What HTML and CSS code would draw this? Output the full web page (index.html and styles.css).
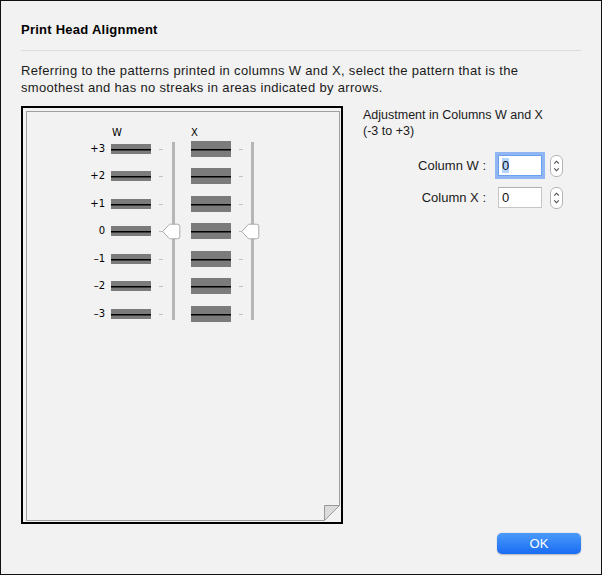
FILE: index.html
```html
<!DOCTYPE html>
<html>
<head>
<meta charset="utf-8">
<link rel="stylesheet" href="styles.css">
</head>
<body>
<div class="window">
  <h1 class="title">Print Head Alignment</h1>
  <hr class="sep">
  <p class="desc">Referring to the patterns printed in columns W and X, select the pattern that is the<br>smoothest and has no streaks in areas indicated by arrows.</p>
  <div class="main">
    <div class="paper">
      <div class="sheet">
        <div class="chart">
          <span class="hdr hdr-w">W</span>
          <span class="hdr hdr-x">X</span>

          <span class="num">+3</span><span class="wbar"></span><span class="dash wdash"></span><span class="xbar"></span><span class="dash xdash"></span>
          <span class="num">+2</span><span class="wbar"></span><span class="dash wdash"></span><span class="xbar"></span><span class="dash xdash"></span>
          <span class="num">+1</span><span class="wbar"></span><span class="dash wdash"></span><span class="xbar"></span><span class="dash xdash"></span>
          <span class="num">0</span><span class="wbar"></span><span class="dash wdash"></span><span class="xbar"></span><span class="dash xdash"></span>
          <span class="num">–1</span><span class="wbar"></span><span class="dash wdash"></span><span class="xbar"></span><span class="dash xdash"></span>
          <span class="num">–2</span><span class="wbar"></span><span class="dash wdash"></span><span class="xbar"></span><span class="dash xdash"></span>
          <span class="num">–3</span><span class="wbar"></span><span class="dash wdash"></span><span class="xbar"></span><span class="dash xdash"></span>

          <span class="track track-w"></span>
          <span class="track track-x"></span>
          <svg class="knob knob-w" viewBox="0 0 19 17" width="19" height="17"><path d="M0.8 8.5 L6.6 2.2 Q7.4 1.2 8.6 1.2 H15.5 Q17.8 1.2 17.8 3.5 V13.5 Q17.8 15.8 15.5 15.8 H8.6 Q7.4 15.8 6.6 14.8 Z" fill="#fff" stroke="#a9a9a9" stroke-width="1"/></svg>
          <svg class="knob knob-x" viewBox="0 0 19 17" width="19" height="17"><path d="M0.8 8.5 L6.6 2.2 Q7.4 1.2 8.6 1.2 H15.5 Q17.8 1.2 17.8 3.5 V13.5 Q17.8 15.8 15.5 15.8 H8.6 Q7.4 15.8 6.6 14.8 Z" fill="#fff" stroke="#a9a9a9" stroke-width="1"/></svg>
        </div>
        <svg class="fold" viewBox="0 0 16 16" width="16" height="16">
          <path d="M16 0 V16 H0 Z" fill="#f2f2f2"/>
          <path d="M0.5 0.5 H15.5 L0.5 15.5 Z" fill="#dcdcdc" stroke="#9a9a9a" stroke-width="1"/>
        </svg>
      </div>
    </div>
    <div class="panel">
      <p class="hint">Adjustment in Columns W and X<br>(-3 to +3)</p>
      <div class="form">
        <span class="label">Column W :</span>
        <span class="field focus"><span class="sel">0</span></span>
        <svg class="stepper" viewBox="0 0 13 22" width="13" height="22"><rect x="0.5" y="0.5" width="12" height="21" rx="5.5" fill="#fff" stroke="#b3b3b3"/><path d="M4.2 8.6 L6.5 6.2 L8.8 8.6" fill="none" stroke="#4a4a4a" stroke-width="1.1"/><path d="M4.2 13.4 L6.5 15.8 L8.8 13.4" fill="none" stroke="#4a4a4a" stroke-width="1.1"/></svg>

        <span class="label">Column X :</span>
        <span class="field">0</span>
        <svg class="stepper" viewBox="0 0 13 22" width="13" height="22"><rect x="0.5" y="0.5" width="12" height="21" rx="5.5" fill="#fff" stroke="#b3b3b3"/><path d="M4.2 8.6 L6.5 6.2 L8.8 8.6" fill="none" stroke="#4a4a4a" stroke-width="1.1"/><path d="M4.2 13.4 L6.5 15.8 L8.8 13.4" fill="none" stroke="#4a4a4a" stroke-width="1.1"/></svg>
      </div>
    </div>
  </div>
  <div class="footer"><button class="ok">OK</button></div>
</div>
</body>
</html>
```
FILE: styles.css
```css
html, body {
  margin: 0;
  padding: 0;
  background: #f2f2f2;
}
.window {
  box-sizing: border-box;
  width: 602px;
  height: 575px;
  border: 1px solid #111;
  background: #f2f2f2;
  padding: 21px 20px 20px 20px;
  display: flex;
  flex-direction: column;
  font-family: "Liberation Sans", Arial, sans-serif;
  color: #1a1a1a;
}
.title {
  margin: 0;
  font-size: 13px;
  line-height: 16px;
  font-weight: bold;
  letter-spacing: 0.25px;
  color: #000;
}
.sep {
  margin: 12px 0 0 0;
  border: 0;
  height: 1px;
  background: #dcdcdc;
}
.desc {
  margin: 11px 0 0 0;
  font-size: 13px;
  line-height: 17px;
  letter-spacing: 0.33px;
}
.main {
  margin-top: 10px;
  display: flex;
  align-items: flex-start;
}
.paper {
  box-sizing: border-box;
  width: 322px;
  height: 418px;
  border: 2px solid #000;
  padding: 3px 1px 1px 3px;
  display: flex;
}
.sheet {
  position: relative;
  flex: 1;
  border: 1px solid #9f9f9f;
}
.chart {
  display: grid;
  grid-template-columns: 30px 6px 40px 21px 3px 16px 40px 20px 3px;
  grid-template-rows: 9px 27px 28px 27px 28px 27px 28px 27px;
  margin: 14px 0 0 48px;
  font-family: "DejaVu Sans", sans-serif;
  font-size: 10px;
  color: #000;
}
.hdr {
  line-height: 9px;
  padding-top: 2px;
}
.hdr-w { grid-column: 3; padding-left: 1px; }
.hdr-x { grid-column: 7; }
.num {
  grid-column: 1;
  justify-self: end;
  align-self: start;
  margin-top: 8px;
  line-height: 12px;
}
.wbar {
  grid-column: 3;
  align-self: start;
  margin-top: 9px;
  height: 10px;
  background: linear-gradient(#7b7b7b 0, #7b7b7b 5px, #000 5px, #000 6px, #3c3c3c 6px, #3c3c3c 7px, #7b7b7b 7px);
}
.xbar {
  grid-column: 7;
  align-self: start;
  margin-top: 6px;
  height: 16px;
  background: linear-gradient(#7b7b7b 0, #7b7b7b 8px, #000 8px, #000 9px, #3c3c3c 9px, #3c3c3c 10px, #7b7b7b 10px);
}
.dash {
  align-self: start;
  justify-self: start;
  width: 4px;
  height: 1px;
  margin: 14px 0 0 8px;
  background: #c2c2c2;
}
.wdash { grid-column: 4; }
.xdash { grid-column: 8; }
.track {
  grid-row: 2 / 9;
  margin: 7px 0 7px 0;
  background: #b6b6b6;
}
.track-w { grid-column: 5; }
.track-x { grid-column: 9; }
.knob {
  grid-row: 5;
  align-self: start;
  justify-self: start;
  margin: 6px 0 0 -10px;
  z-index: 1;
  display: block;
}
.knob-w { grid-column: 5; }
.knob-x { grid-column: 9; }
.fold {
  position: absolute;
  right: -1px;
  bottom: -1px;
  display: block;
}
.panel {
  margin-left: 20px;
}
.hint {
  margin: 1px 0 0 0;
  font-size: 12.5px;
  line-height: 16px;
}
.form {
  margin-top: 16px;
  display: grid;
  grid-template-columns: 123px 56px 21px;
  grid-auto-rows: 21px;
  row-gap: 11px;
  font-size: 13px;
}
.label {
  justify-self: end;
  align-self: center;
  line-height: 16px;
}
.field {
  box-sizing: border-box;
  margin-left: 12px;
  width: 44px;
  height: 21px;
  background: #fff;
  border: 1px solid #c6c6c6;
  border-top-color: #b0b0b0;
  padding-left: 3px;
  line-height: 19px;
  color: #111;
}
.field.focus {
  border-color: #6b9ff0;
  box-shadow: 0 0 0 3px #8fb6f3;
}
.sel {
  background: #b4d5fe;
}
.stepper {
  margin-left: 8px;
  align-self: center;
  display: block;
}
.footer {
  margin-top: 9px;
  display: flex;
  justify-content: flex-end;
}
.ok {
  width: 84px;
  height: 21px;
  border: 0;
  border-radius: 5px;
  background: linear-gradient(#4a9bfb, #1a6bf2);
  color: #fff;
  font-family: "Liberation Sans", Arial, sans-serif;
  font-size: 13px;
  padding: 0;
  box-shadow: 0 0.5px 1.5px rgba(0, 0, 0, 0.25);
}
```
